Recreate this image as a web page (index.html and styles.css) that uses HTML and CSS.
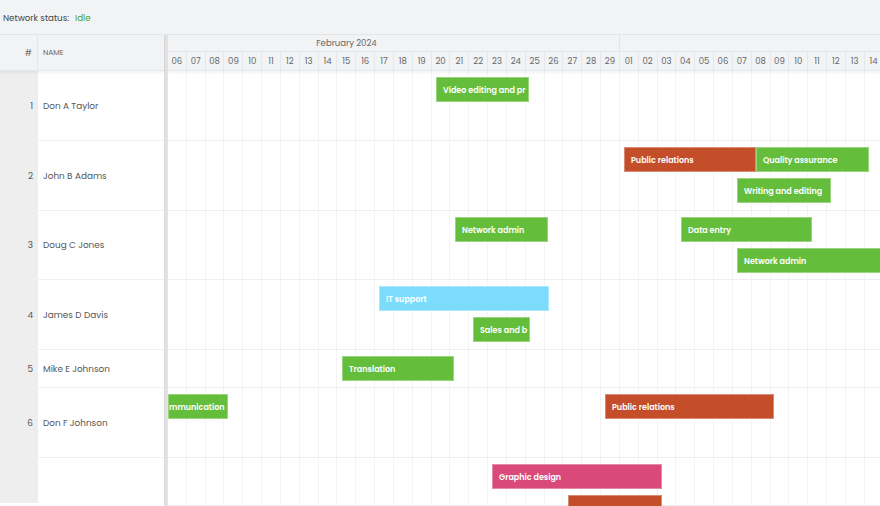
FILE: index.html
```html
<!DOCTYPE html>
<html>
<head>
<meta charset="utf-8">
<link rel="stylesheet" href="styles.css">
</head>
<body>
<div class="status"><span class="status-label">Network status:</span><span class="status-value">Idle</span></div>
<div class="gantt">
  <div class="left">
    <div class="left-head">
      <div class="col-num">#</div>
      <div class="col-name">NAME</div>
    </div>
    <div class="left-body">
      <div class="lrow h70"><div class="col-num">1</div><div class="col-name">Don A Taylor</div></div>
      <div class="lrow h70"><div class="col-num">2</div><div class="col-name">John B Adams</div></div>
      <div class="lrow h69"><div class="col-num">3</div><div class="col-name">Doug C Jones</div></div>
      <div class="lrow h70"><div class="col-num">4</div><div class="col-name">James D Davis</div></div>
      <div class="lrow h38"><div class="col-num">5</div><div class="col-name">Mike E Johnson</div></div>
      <div class="lrow h70"><div class="col-num">6</div><div class="col-name">Don F Johnson</div></div>
      <div class="lrow last"><div class="col-num"></div><div class="col-name"></div></div>
    </div>
  </div>
  <div class="splitter"></div>
  <div class="timeline">
    <div class="t-head">
      <div class="months">
        <div class="month feb">February 2024</div>
        <div class="month mar"></div>
      </div>
      <div class="days">
        <div class="day">06</div><div class="day">07</div><div class="day">08</div><div class="day">09</div><div class="day">10</div><div class="day">11</div><div class="day">12</div><div class="day">13</div><div class="day">14</div><div class="day">15</div><div class="day">16</div><div class="day">17</div><div class="day">18</div><div class="day">19</div><div class="day">20</div><div class="day">21</div><div class="day">22</div><div class="day">23</div><div class="day">24</div><div class="day">25</div><div class="day">26</div><div class="day">27</div><div class="day">28</div><div class="day">29</div><div class="day">01</div><div class="day">02</div><div class="day">03</div><div class="day">04</div><div class="day">05</div><div class="day">06</div><div class="day">07</div><div class="day">08</div><div class="day">09</div><div class="day">10</div><div class="day">11</div><div class="day">12</div><div class="day">13</div><div class="day">14</div>
      </div>
    </div>
    <div class="t-body">
      <div class="trow h70">
        <div class="bar green lane1" style="left:268px;width:93px">Video editing and pr</div>
      </div>
      <div class="trow h70">
        <div class="bar red lane1" style="left:456px;width:132px">Public relations</div>
        <div class="bar green lane1" style="left:588px;width:113px">Quality assurance</div>
        <div class="bar green lane2" style="left:569px;width:94px">Writing and editing</div>
      </div>
      <div class="trow h69">
        <div class="bar green lane1" style="left:287px;width:93px">Network admin</div>
        <div class="bar green lane1" style="left:513px;width:131px">Data entry</div>
        <div class="bar green lane2" style="left:569px;width:160px">Network admin</div>
      </div>
      <div class="trow h70">
        <div class="bar blue lane1" style="left:211px;width:170px">IT support</div>
        <div class="bar green lane2" style="left:305px;width:57px">Sales and b</div>
      </div>
      <div class="trow h38">
        <div class="bar green lane1" style="left:174px;width:112px">Translation</div>
      </div>
      <div class="trow h70">
        <div class="bar green lane1 flush" style="left:0;width:60px">mmunication</div>
        <div class="bar red lane1" style="left:437px;width:169px">Public relations</div>
      </div>
      <div class="trow last">
        <div class="bar pink lane1" style="left:324px;width:170px">Graphic design</div>
        <div class="bar red lane2" style="left:400px;width:94px"></div>
      </div>
    </div>
  </div>
</div>
</body>
</html>
```
FILE: styles.css
```css
* { box-sizing: border-box; }
html, body { margin: 0; padding: 0; }
body {
  width: 880px;
  height: 506px;
  overflow: hidden;
  font-family: Poppins, Inter, "Open Sans", sans-serif;
  background: #ffffff;
  color: #555;
}
.status {
  height: 35px;
  display: flex;
  align-items: center;
  padding-left: 3px;
  padding-top: 2px;
  background: #f2f3f5;
  border-bottom: 1px solid #e4e5e8;
  font-size: 8.7px;
  color: #444;
}
.status-label { margin-right: 6px; }
.status-value { color: #4d9e1e; }

.gantt {
  display: flex;
  height: 471px;
}
.left {
  width: 164px;
  flex: none;
  display: flex;
  flex-direction: column;
}
.left-head {
  height: 36px;
  display: flex;
  background: #f2f3f5;
  border-bottom: 1px solid #e6e7ea;
  box-shadow: 0 2px 3px rgba(0,0,0,0.05);
  font-size: 7.5px;
  color: #666;
  position: relative;
  z-index: 2;
}
.left-head .col-num {
  width: 38px;
  border-right: 1px solid #e4e5e8;
  display: flex;
  align-items: center;
  justify-content: flex-end;
  padding-right: 5px;
  padding-top: 1px;
  font-size: 8.5px;
}
.left-head .col-name {
  flex: 1;
  display: flex;
  align-items: center;
  padding-left: 5px;
  padding-top: 1px;
}
.left-body { flex: 1; display: flex; flex-direction: column; }
.lrow {
  display: flex;
  border-bottom: 1px solid #f0f0f0;
  font-size: 8.9px;
  color: #555;
}
.lrow .col-num {
  width: 38px;
  background: #eeeeee;
  display: flex;
  align-items: center;
  justify-content: flex-end;
  padding-right: 5px;
  padding-top: 1px;
}
.lrow .col-name {
  flex: 1;
  display: flex;
  align-items: center;
  padding-left: 5px;
  padding-top: 1px;
}
.h70 { height: 70px; flex: none; }
.h69 { height: 69px; flex: none; }
.h38 { height: 38px; flex: none; }
.lrow.last { flex: 1; border-bottom: none; margin-bottom: 3px; }

.splitter {
  width: 4px;
  flex: none;
  background: #e2e2e2;
  border-left: 1px solid #dadada;
}
.timeline {
  flex: 1;
  overflow: hidden;
  display: flex;
  flex-direction: column;
}
.t-head {
  height: 36px;
  flex: none;
  background: #f2f3f5;
  border-bottom: 1px solid #e6e7ea;
  box-shadow: 0 2px 3px rgba(0,0,0,0.05);
  position: relative;
  z-index: 2;
  width: 716px;
}
.months {
  height: 17px;
  display: flex;
  border-bottom: 1px solid #e6e7ea;
}
.month {
  font-size: 8.5px;
  color: #666;
  display: flex;
  align-items: center;
  justify-content: center;
  padding-top: 1px;
}
.month.feb { width: 452px; padding-right: 94px; border-right: 1px solid #e2e3e6; }
.month.mar { flex: 1; }
.days {
  height: 18px;
  display: grid;
  grid-template-columns: repeat(38, 18.83px);
}
.day {
  font-size: 8.5px;
  color: #666;
  display: flex;
  align-items: center;
  justify-content: center;
  padding-top: 1px;
  border-right: 1px solid #e6e7ea;
}
.t-body {
  flex: 1;
  display: flex;
  flex-direction: column;
  background-image: repeating-linear-gradient(to right, transparent 0, transparent 17.83px, #f4f4f4 17.83px, #f4f4f4 18.83px);
}
.trow {
  position: relative;
  border-bottom: 1px solid #efefef;
}
.trow.last { flex: 1; }
.bar {
  position: absolute;
  height: 25px;
  display: flex;
  align-items: center;
  padding-left: 6px;
  padding-top: 3px;
  white-space: nowrap;
  overflow: hidden;
  color: #fff;
  font-size: 8px;
  font-weight: 600;
  border: 1px solid rgba(255,255,255,0.35);
}
.bar.flush { padding-left: 0; }
.lane1 { top: 6px; }
.lane2 { top: 37px; }
.green { background: #64be3b; }
.red { background: #c44d2a; }
.blue { background: #7cdcfb; }
.pink { background: #d9497a; }
```
